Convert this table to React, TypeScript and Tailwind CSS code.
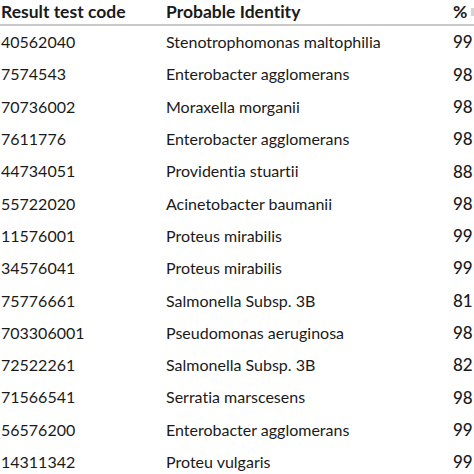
const rows: [string, string, string][] = [
  ['40562040', 'Stenotrophomonas maltophilia', '99'],
  ['7574543', 'Enterobacter agglomerans', '98'],
  ['70736002', 'Moraxella morganii', '98'],
  ['7611776', 'Enterobacter agglomerans', '98'],
  ['44734051', 'Providentia stuartii', '88'],
  ['55722020', 'Acinetobacter baumanii', '98'],
  ['11576001', 'Proteus mirabilis', '99'],
  ['34576041', 'Proteus mirabilis', '99'],
  ['75776661', 'Salmonella Subsp. 3B', '81'],
  ['703306001', 'Pseudomonas aeruginosa', '98'],
  ['72522261', 'Salmonella Subsp. 3B', '82'],
  ['71566541', 'Serratia marscesens', '98'],
  ['56576200', 'Enterobacter agglomerans', '99'],
  ['14311342', 'Proteu vulgaris', '99'],
];

export default function App() {
  return (
    <div className="w-[474px] h-[474px] overflow-hidden bg-white text-[#1a1a1a] font-['Lato','Liberation_Sans',sans-serif] text-[16px] [font-variant-ligatures:none]">
      <div className="flex h-[26px] items-center border-b-2 border-[#c9c9c9] text-[17.5px] font-bold">
        <div className="w-[166px] shrink-0 pl-[1px]">Result test code</div>
        <div className="w-[287px] shrink-0">Probable Identity</div>
        <div className="flex flex-1 items-center gap-[4px] whitespace-nowrap">
          %<span className="h-[8px] w-[4px] bg-[#d4d4d4]" />
        </div>
      </div>
      {rows.map(([code, name, pct]) => (
        <div key={code} className="flex h-[32.3px] items-center">
          <div className="w-[166px] shrink-0 pl-[1px]">{code}</div>
          <div className="w-[287px] shrink-0">{name}</div>
          <div className="flex flex-1 items-end gap-[1px] whitespace-nowrap text-[17px] font-medium">
            {pct}
            <span className="mb-[5px] h-[2px] w-[2px] bg-[#cccccc]" />
          </div>
        </div>
      ))}
    </div>
  );
}
